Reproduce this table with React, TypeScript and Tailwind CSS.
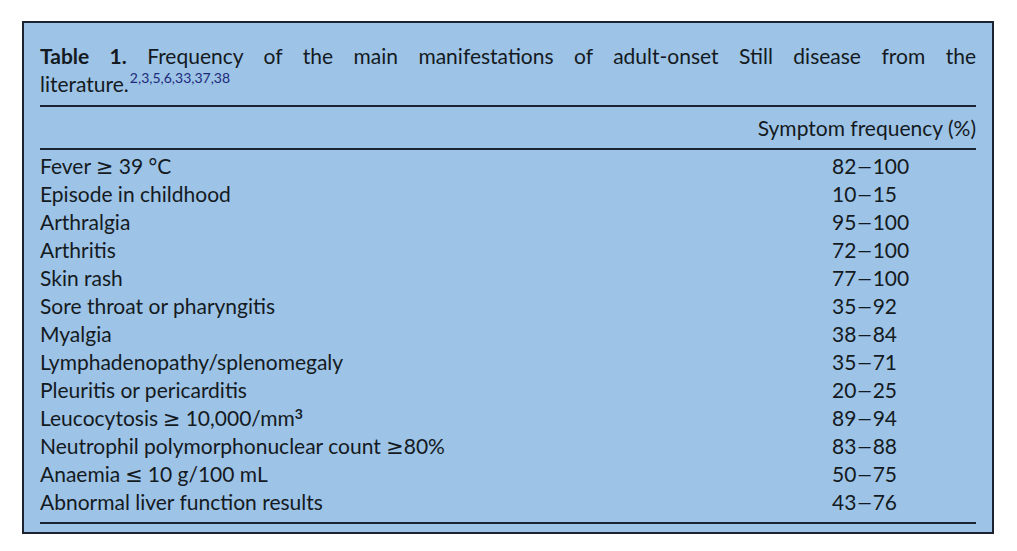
import React from "react";

const Ge = ({ c }: { c: string }) => (
  <span className="mx-[5px]" style={{ fontFamily: '"DejaVu Sans", sans-serif' }}>{c}</span>
);

const Range = ({ v }: { v: string }) => {
  const [a, b] = v.split("-");
  return (
    <>
      {a}
      <span className="text-[18px] relative -top-[1px] mx-[1px]">—</span>
      {b}
    </>
  );
};

const rows: [React.ReactNode, string][] = [
  [<>Fever<Ge c="≥" />39 °C</>, "82-100"],
  ["Episode in childhood", "10-15"],
  ["Arthralgia", "95-100"],
  ["Arthritis", "72-100"],
  ["Skin rash", "77-100"],
  ["Sore throat or pharyngitis", "35-92"],
  ["Myalgia", "38-84"],
  ["Lymphadenopathy/splenomegaly", "35-71"],
  ["Pleuritis or pericarditis", "20-25"],
  [<>Leucocytosis<Ge c="≥" />10,000/mm<sup className="text-[14px] font-bold">3</sup></>, "89-94"],
  [<>Neutrophil polymorphonuclear count <span style={{ fontFamily: '"DejaVu Sans", sans-serif' }}>≥</span>80%</>, "83-88"],
  [<>Anaemia<Ge c="≤" />10 g/100 mL</>, "50-75"],
  ["Abnormal liver function results", "43-76"],
];

export default function App() {
  return (
    <div className="w-[1017px] h-[551px] bg-white pt-[21px] pl-[22px]" style={{ fontFamily: '"Lato", "Open Sans", sans-serif' }}>
      <div className="w-[972px] h-[513px] bg-[#9dc3e6] border-2 border-[#1b2330] px-[16px] pt-[19px] text-[#141a22] text-[21px]">
        <div className="leading-[28px] h-[56px]">
          <p className="text-justify [text-align-last:justify]">
            <b>Table 1.</b> Frequency of the main manifestations of adult-onset Still disease from the
          </p>
          <p>
            literature.
            <sup className="text-[14px] text-[#1c2a7a] ml-[1px] -top-[9px]">2,3,5,6,33,37,38</sup>
          </p>
        </div>
        <div className="mt-[7px] h-[2px] bg-[#1b2330]" />
        <div className="h-[41px] flex items-center justify-end">Symptom frequency (%)</div>
        <div className="h-[2px] bg-[#1b2330]" />
        <div className="pt-[2px]">
          {rows.map(([label, val], i) => (
            <div key={i} className="flex h-[28px] items-center leading-[28px]">
              <div className="w-[792px]">{label}</div>
              <div>
                <Range v={val} />
              </div>
            </div>
          ))}
        </div>
        <div className="mt-[6px] h-[2px] bg-[#1b2330]" />
      </div>
    </div>
  );
}
